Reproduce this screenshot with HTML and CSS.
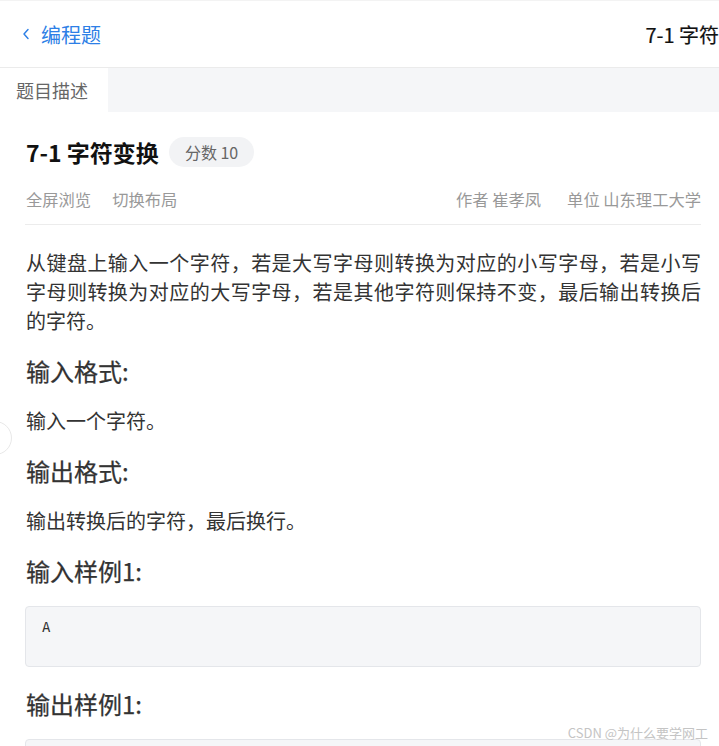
FILE: index.html
```html
<!DOCTYPE html>
<html lang="zh-CN">
  <head>
    <meta charset="UTF-8" />
    <title>7-1 字符变换 - 编程题</title>
    <link rel="stylesheet" href="styles.css">
  </head>
  <body>
    <header class="topbar">
      <a class="back" href="#">
        <svg class="back-icon" viewBox="0 0 10 14" width="8" height="12">
          <path d="M7.5 1.5 L2.5 7 L7.5 12.5" fill="none" stroke="currentColor" stroke-width="1.8" stroke-linecap="round" stroke-linejoin="round" />
        </svg>
        编程题
      </a>
      <span class="top-title">7-1 字符变换</span>
    </header>

    <nav class="tabs">
      <span class="tab active">题目描述</span>
    </nav>

    <main class="content">
      <div class="title-row">
        <h1 class="title">7-1 字符变换</h1>
        <span class="score">分数 10</span>
      </div>

      <div class="meta">
        <div class="meta-group">
          <span>全屏浏览</span>
          <span>切换布局</span>
        </div>
        <div class="meta-group right">
          <span>作者 崔孝凤</span>
          <span>单位 山东理工大学</span>
        </div>
      </div>

      <div class="problem">
        <p class="desc">从键盘上输入一个字符，若是大写字母则转换为对应的小写字母，若是小写字母则转换为对应的大写字母，若是其他字符则保持不变，最后输出转换后的字符。</p>

        <h3>输入格式:</h3>
        <p>输入一个字符。</p>

        <h3>输出格式:</h3>
        <p>输出转换后的字符，最后换行。</p>

        <h3>输入样例1:</h3>
        <pre class="sample">A</pre>

        <h3>输出样例1:</h3>
        <pre class="sample">a</pre>
      </div>
    </main>

    <div class="side-dot"></div>
    <div class="watermark">CSDN @为什么要学网工</div>
  </body>
</html>
```

FILE: styles.css
```css
body {
  margin: 0;
  font-family: "Noto Sans CJK SC", "Noto Sans", sans-serif;
  color: #333;
  background: #fff;
  overflow: hidden;
}
.topbar {
  display: flex;
  align-items: center;
  padding: 0 16px 0 22px;
  border-top: 1px solid #f3f3f3;
  border-bottom: 1px solid #ebebeb;
  box-sizing: border-box;
  height: 68px;
  overflow: hidden;
}
.back {
  display: flex;
  align-items: center;
  gap: 11px;
  color: #2d7fe6;
  text-decoration: none;
  font-size: 20px;
}
.top-title {
  margin-left: auto;
  margin-right: -56px;
  white-space: nowrap;
  font-size: 20px;
  font-weight: 400;
  -webkit-text-stroke: 0.2px currentColor;
  color: #111;
}
.tabs {
  height: 44px;
  display: flex;
  background: #f5f6f8;
}
.tab {
  display: flex;
  align-items: center;
  padding: 0 20px 0 16px;
  font-size: 18px;
  color: #666;
}
.tab.active {
  background: #fff;
}
.content {
  padding: 25px 18px 0 25px;
}
.title-row {
  display: flex;
  align-items: center;
  gap: 10px;
  padding-left: 1px;
}
.title {
  margin: 0;
  font-size: 23px;
  font-weight: 700;
  color: #111;
  line-height: 30px;
}
.score {
  height: 30px;
  line-height: 30px;
  padding: 0 16px;
  border-radius: 15px;
  background: #f2f3f5;
  color: #666;
  font-size: 16px;
}
.meta {
  display: flex;
  justify-content: space-between;
  margin-top: 20px;
  padding: 0 0 13px 1px;
  border-bottom: 1px solid #ececec;
  font-size: 16.3px;
  line-height: 24px;
  color: #999;
}
.meta-group {
  display: flex;
  gap: 21px;
}
.meta-group.right {
  gap: 26px;
}
.problem {
  padding-top: 23px;
}
.problem p {
  margin: 0 0 18px 1px;
  font-size: 20px;
  line-height: 29px;
}
.desc {
  text-align: justify;
}
.problem h3 {
  margin: 19px 0 18px 1px;
  font-size: 24px;
  line-height: 34px;
  font-weight: 400;
  -webkit-text-stroke: 0.25px currentColor;
  color: #333;
}
.sample {
  margin: 17px 0 20px;
  height: 61px;
  box-sizing: border-box;
  padding: 10px 16px;
  background: #f5f6f8;
  border: 1px solid #e4e6ea;
  border-radius: 4px;
  font-family: "DejaVu Sans Mono", monospace;
  font-size: 14px;
  line-height: 20px;
  color: #333;
}
.side-dot {
  position: absolute;
  left: -22px;
  top: 421px;
  width: 32px;
  height: 32px;
  border-radius: 50%;
  border: 1px solid #e8e8e8;
  background: #fff;
}
.watermark {
  position: absolute;
  right: 11px;
  top: 723px;
  font-size: 13px;
  color: #c4c4c4;
  text-shadow: 0 0 2px #fff;
}
```
